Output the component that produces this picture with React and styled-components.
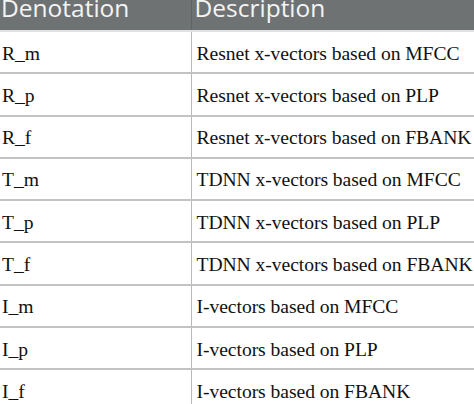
import React from "react";
import styled, { createGlobalStyle } from "styled-components";

const GlobalStyle = createGlobalStyle`
  html, body {
    margin: 0;
    padding: 0;
    background: #ffffff;
  }
`;

const rows = [
  ["R_m", "Resnet x-vectors based on MFCC"],
  ["R_p", "Resnet x-vectors based on PLP"],
  ["R_f", "Resnet x-vectors based on FBANK"],
  ["T_m", "TDNN x-vectors based on MFCC"],
  ["T_p", "TDNN x-vectors based on PLP"],
  ["T_f", "TDNN x-vectors based on FBANK"],
  ["I_m", "I-vectors based on MFCC"],
  ["I_p", "I-vectors based on PLP"],
  ["I_f", "I-vectors based on FBANK"],
];

const Table = styled.div`
  width: 474px;
  height: 404px;
  overflow: hidden;
  display: flex;
  flex-direction: column;
`;

const Row = styled.div`
  display: grid;
  grid-template-columns: 192px 1fr;
  flex-shrink: 0;
  border-bottom: 2px solid ${(p) => (p.$head ? "#e2e2e2" : "#c3c3c3")};
`;

const HeadCell = styled.div`
  height: 30px;
  overflow: hidden;
  background: #6e7273;
  color: #f4f4f4;
  font-family: "Open Sans", "Noto Sans", sans-serif;
  font-size: 24.5px;
  line-height: 15px;
  padding-left: ${(p) => (p.$first ? "1px" : "2.5px")};
  border-right: ${(p) => (p.$first ? "1.5px solid #5f6364" : "none")};
  white-space: nowrap;
`;

const Cell = styled.div`
  height: 36.8px;
  padding-top: 3.5px;
  line-height: 36.8px;
  font-family: "Liberation Serif", "Times New Roman", serif;
  font-size: 19.6px;
  letter-spacing: -0.05px;
  color: #111111;
  padding-left: ${(p) => (p.$first ? "2px" : "4.5px")};
  border-right: ${(p) => (p.$first ? "1.5px solid #b9b9b9" : "none")};
  white-space: nowrap;
`;

export default function App() {
  return (
    <>
      <GlobalStyle />
      <Table>
        <Row $head>
          <HeadCell $first>Denotation</HeadCell>
          <HeadCell>Description</HeadCell>
        </Row>
        {rows.map(([code, desc]) => (
          <Row key={code}>
            <Cell $first>{code}</Cell>
            <Cell>{desc}</Cell>
          </Row>
        ))}
      </Table>
    </>
  );
}
